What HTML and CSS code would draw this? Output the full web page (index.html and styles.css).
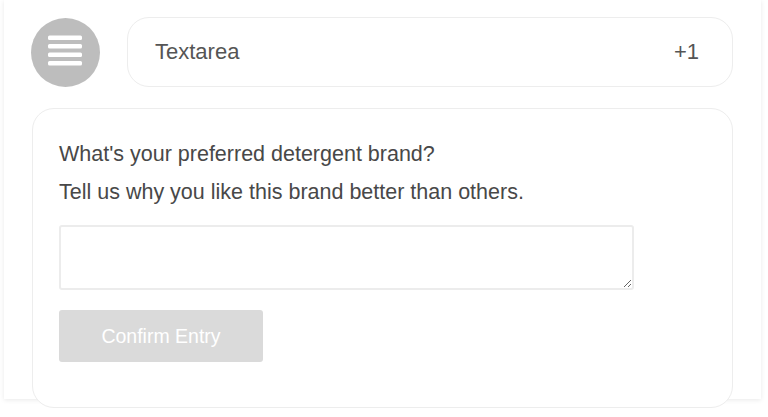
FILE: index.html
```html
<!DOCTYPE html>
<html lang="en">
<head>
<meta charset="utf-8">
<title>Textarea</title>
<link rel="stylesheet" href="styles.css">
</head>
<body>
<div class="panel">
  <div class="header">
    <svg class="avatar" width="69" height="69" viewBox="0 0 69 69" aria-hidden="true">
      <circle cx="34.5" cy="34.5" r="34.5" fill="#bdbdbd"/>
      <rect x="17" y="17.5" width="34" height="4.5" rx="1.5" fill="#fff"/>
      <rect x="17" y="26" width="34" height="4.5" rx="1.5" fill="#fff"/>
      <rect x="17" y="34.5" width="34" height="4.5" rx="1.5" fill="#fff"/>
      <rect x="17" y="43" width="34" height="4.5" rx="1.5" fill="#fff"/>
    </svg>
    <div class="title-card">
      <span class="title">Textarea</span>
      <span class="count">+1</span>
    </div>
  </div>
  <div class="card">
    <p class="question">What's your preferred detergent brand?</p>
    <p class="hint">Tell us why you like this brand better than others.</p>
    <textarea class="answer"></textarea>
    <button class="confirm" type="button" disabled>Confirm Entry</button>
  </div>
</div>
</body>
</html>
```

FILE: styles.css
```css
html, body {
  margin: 0;
  padding: 0;
  background: #ffffff;
  overflow: hidden;
}

body {
  font-family: "Liberation Sans", Arial, Helvetica, sans-serif;
  width: 768px;
  height: 417px;
}

.panel {
  box-sizing: border-box;
  margin-left: 4px;
  width: 757px;
  height: 399px;
  background: #ffffff;
  box-shadow: 0 1px 5px rgba(0, 0, 0, 0.09);
  padding: 17px 28px 0 27px;
}

.header {
  display: flex;
  align-items: center;
  gap: 27px;
}

.avatar {
  flex: none;
  display: block;
}

.title-card {
  box-sizing: border-box;
  flex: 1;
  height: 70px;
  border: 1px solid #ededed;
  border-radius: 22px;
  display: flex;
  align-items: center;
  justify-content: space-between;
  padding: 0 33px 0 27px;
  font-size: 22px;
  color: #555555;
  background: #fff;
}

.card {
  box-sizing: border-box;
  position: relative;
  margin-top: 21px;
  margin-left: 1px;
  height: 300px;
  border: 1px solid #ededed;
  border-radius: 22px;
  background: #ffffff;
  padding: 32px 26px 0 26px;
  display: flex;
  flex-direction: column;
  align-items: flex-start;
}

.question,
.hint {
  margin: 0;
  font-size: 21.5px;
  line-height: 26px;
  color: #484848;
  white-space: nowrap;
}

.hint {
  margin-top: 12px;
}

.answer {
  box-sizing: border-box;
  margin-top: 20px;
  width: 575px;
  height: 65px;
  border: 2px solid #ececec;
  border-radius: 3px;
  background: #fff;
  font-family: inherit;
  padding: 4px;
}

.confirm {
  margin-top: 20px;
  width: 204px;
  height: 52px;
  border: none;
  border-radius: 3px;
  background: #dadada;
  color: #ffffff;
  font-family: inherit;
  font-size: 19.5px;
  padding: 0;
}
```
